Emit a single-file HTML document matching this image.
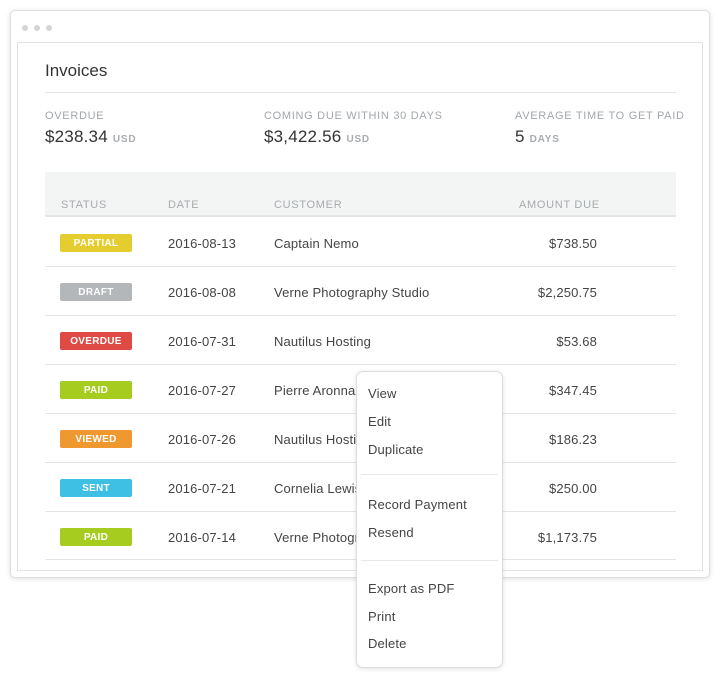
<!DOCTYPE html><html><head><style>
body{margin:0;width:720px;height:678px;background:#fff;font-family:"Liberation Sans",sans-serif;position:relative;overflow:hidden}
.win{position:absolute;left:10px;top:10px;width:700px;height:568px;border:1px solid #ddd;border-radius:5px;box-shadow:0 1px 6px rgba(0,0,0,.12);background:#fff;box-sizing:border-box}
.dot{position:absolute;top:14px;width:6px;height:6px;border-radius:50%;background:#d3d5d7}
.panel{position:absolute;left:17px;top:42px;width:686px;height:529px;border:1px solid #e3e3e3;box-sizing:border-box}
.a{position:absolute;white-space:nowrap}
.lbl{font-size:11px;color:#a3a7aa;letter-spacing:.7px}
.val{font-size:17px;color:#333;letter-spacing:.2px}
.val small{font-size:10px;color:#a8acaf;letter-spacing:.8px;font-weight:bold;margin-left:5px}
.hdr{position:absolute;left:45px;top:172px;width:631px;height:45px;background:#f3f4f4;border-bottom:2px solid #e3e5e6;box-sizing:border-box}
.h{font-size:11px;color:#a7abae;letter-spacing:.7px;top:199px}
.line{position:absolute;left:45px;width:631px;height:1px;background:#e3e4e5}
.b{position:absolute;left:60px;width:72px;height:18px;border-radius:2px;color:#fff;font-size:10px;font-weight:bold;text-align:center;line-height:19px;letter-spacing:.3px}
.t{font-size:13px;color:#444;letter-spacing:.15px}
.r{text-align:right;width:120px;left:477px}
.menu{position:absolute;left:356px;top:371px;width:147px;height:297px;background:#fff;border:1px solid #ddd;border-radius:7px;box-shadow:0 1px 5px rgba(0,0,0,.12);box-sizing:border-box}
.m{position:absolute;left:11px;font-size:13px;color:#444;letter-spacing:.15px}
.sep{position:absolute;left:4px;right:4px;height:1px;background:#e8e8e8}
</style></head><body>
<div class="win"><div class="dot" style="left:11px"></div><div class="dot" style="left:23px"></div><div class="dot" style="left:35px"></div></div>
<div class="panel"></div>
<div class="a" style="left:45px;top:61px;font-size:17px;color:#333">Invoices</div>
<div class="line" style="top:92px"></div>
<div class="a lbl" style="left:45px;top:110px">OVERDUE</div>
<div class="a val" style="left:45px;top:127px">$238.34<small>USD</small></div>
<div class="a lbl" style="left:264px;top:110px">COMING DUE WITHIN 30 DAYS</div>
<div class="a val" style="left:264px;top:127px">$3,422.56<small>USD</small></div>
<div class="a lbl" style="left:515px;top:110px">AVERAGE TIME TO GET PAID</div>
<div class="a val" style="left:515px;top:127px">5<small>DAYS</small></div>
<div class="hdr"></div>
<div class="a h" style="left:61px">STATUS</div>
<div class="a h" style="left:168px">DATE</div>
<div class="a h" style="left:274px">CUSTOMER</div>
<div class="a h" style="left:519px">AMOUNT DUE</div>

<div class="b" style="top:234px;background:#e6cd2f">PARTIAL</div><div class="a t" style="left:168px;top:236px">2016-08-13</div><div class="a t" style="left:274px;top:236px">Captain Nemo</div><div class="a t r" style="top:236px">$738.50</div><div class="line" style="top:266px"></div>
<div class="b" style="top:283px;background:#b3b7ba">DRAFT</div><div class="a t" style="left:168px;top:285px">2016-08-08</div><div class="a t" style="left:274px;top:285px">Verne Photography Studio</div><div class="a t r" style="top:285px">$2,250.75</div><div class="line" style="top:315px"></div>
<div class="b" style="top:332px;background:#df4a45">OVERDUE</div><div class="a t" style="left:168px;top:334px">2016-07-31</div><div class="a t" style="left:274px;top:334px">Nautilus Hosting</div><div class="a t r" style="top:334px">$53.68</div><div class="line" style="top:364px"></div>
<div class="b" style="top:381px;background:#a6cc1f">PAID</div><div class="a t" style="left:168px;top:383px">2016-07-27</div><div class="a t" style="left:274px;top:383px">Pierre Aronnax</div><div class="a t r" style="top:383px">$347.45</div><div class="line" style="top:413px"></div>
<div class="b" style="top:430px;background:#ef982f">VIEWED</div><div class="a t" style="left:168px;top:432px">2016-07-26</div><div class="a t" style="left:274px;top:432px">Nautilus Hosting</div><div class="a t r" style="top:432px">$186.23</div><div class="line" style="top:462px"></div>
<div class="b" style="top:479px;background:#3dc0e3">SENT</div><div class="a t" style="left:168px;top:481px">2016-07-21</div><div class="a t" style="left:274px;top:481px">Cornelia Lewis</div><div class="a t r" style="top:481px">$250.00</div><div class="line" style="top:511px"></div>
<div class="b" style="top:528px;background:#a6cc1f">PAID</div><div class="a t" style="left:168px;top:530px">2016-07-14</div><div class="a t" style="left:274px;top:530px">Verne Photography</div><div class="a t r" style="top:530px">$1,173.75</div><div class="line" style="top:559px"></div>

<div class="menu">
<div class="m" style="top:14px">View</div>
<div class="m" style="top:42px">Edit</div>
<div class="m" style="top:70px">Duplicate</div>
<div class="sep" style="top:102px"></div>
<div class="m" style="top:125px">Record Payment</div>
<div class="m" style="top:153px">Resend</div>
<div class="sep" style="top:188px"></div>
<div class="m" style="top:209px">Export as PDF</div>
<div class="m" style="top:237px">Print</div>
<div class="m" style="top:264px">Delete</div>
</div>
</body></html>
